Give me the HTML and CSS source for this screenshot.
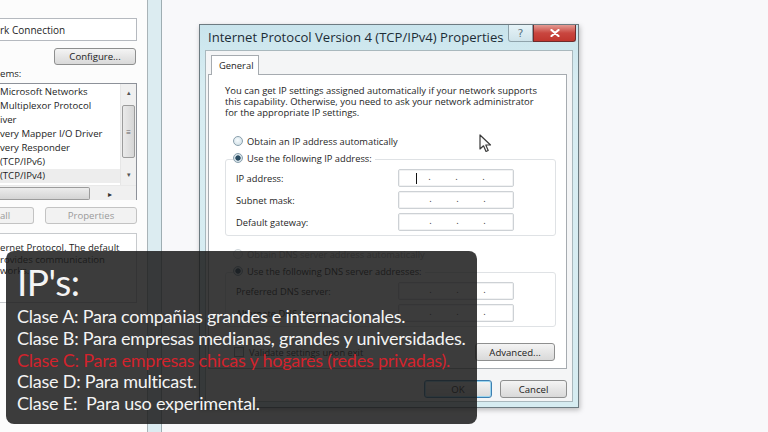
FILE: index.html
```html
<!DOCTYPE html>
<html>
<head>
<meta charset="utf-8">
<link rel="stylesheet" href="styles.css">
</head>
<body>
<div class="screen">
  <div class="leftwin">
    <div class="lw-client">
      <div class="tbox">rk Connection</div>
      <div class="cfg-row"><div class="btn cfg">Configure...</div></div>
      <div class="lbl">ems:</div>
      <div class="listbox">
        <div class="lb-main">
          <div class="lb-items">
            <div class="it">Microsoft Networks</div>
            <div class="it">Multiplexor Protocol</div>
            <div class="it">iver</div>
            <div class="it">very Mapper I/O Driver</div>
            <div class="it">very Responder</div>
            <div class="it">(TCP/IPv6)</div>
            <div class="it sel">(TCP/IPv4)</div>
          </div>
          <div class="vscroll">
            <div class="arr">&#9652;</div>
            <div class="vthumb"><span class="grip">&#8801;</span></div>
            <div class="arr">&#9662;</div>
          </div>
        </div>
        <div class="hscroll">
          <div class="htrack"><div class="hthumb"></div><div class="harr">&#9656;</div></div>
          <div class="corner"></div>
        </div>
      </div>
      <div class="btn-row">
        <div class="btn dis b-all">all</div>
        <div class="btn dis b-prop">Properties</div>
      </div>
      <div class="desc">
        <div>ernet Protocol. The default</div>
        <div>rovides communication</div>
        <div>works.</div>
      </div>
    </div>
    <div class="lw-frame"></div>
  </div>

  <div class="dialog">
    <div class="titlebar">
      <div class="title">Internet Protocol Version 4 (TCP/IPv4) Properties</div>
      <div class="caps">
        <div class="cap help">?</div>
        <div class="cap close">
          <svg width="10" height="8" viewBox="0 0 10 8"><path d="M1.5 1 L8.5 7 M8.5 1 L1.5 7" stroke="#fff" stroke-width="2.2" stroke-linecap="round"/></svg>
        </div>
      </div>
    </div>
    <div class="client">
      <div class="tabs"><div class="tab">General</div></div>
      <div class="panel">
        <p class="intro">You can get IP settings assigned automatically if your network supports<br>this capability. Otherwise, you need to ask your network administrator<br>for the appropriate IP settings.</p>
        <div class="radio r-first"><span class="rb"></span>Obtain an IP address automatically</div>
        <div class="group g1">
          <div class="radio legend"><span class="rb on"></span>Use the following IP address:</div>
          <div class="row"><span class="rl">IP address:</span><span class="field caret"><i class="car"></i><b>.</b><b>.</b><b>.</b></span></div>
          <div class="row"><span class="rl">Subnet mask:</span><span class="field"><b>.</b><b>.</b><b>.</b></span></div>
          <div class="row"><span class="rl">Default gateway:</span><span class="field"><b>.</b><b>.</b><b>.</b></span></div>
        </div>
        <div class="radio r-dns dim"><span class="rb dimrb"></span>Obtain DNS server address automatically</div>
        <div class="group g2">
          <div class="radio legend"><span class="rb on"></span>Use the following DNS server addresses:</div>
          <div class="row"><span class="rl">Preferred DNS server:</span><span class="field"><b>.</b><b>.</b><b>.</b></span></div>
          <div class="row"><span class="rl">Alternate DNS server:</span><span class="field"><b>.</b><b>.</b><b>.</b></span></div>
        </div>
        <div class="valrow">
          <div class="chk"><span class="cb"></span>Validate settings upon exit</div>
          <div class="btn adv">Advanced...</div>
        </div>
      </div>
      <div class="okrow">
        <div class="btn ok">OK</div>
        <div class="btn cancel">Cancel</div>
      </div>
    </div>
  </div>

  <div class="overlay">
    <div class="ov-title">IP's:</div>
    <div class="ov-line">Clase A: Para compañias grandes e internacionales.</div>
    <div class="ov-line">Clase B: Para empresas medianas, grandes y universidades.</div>
    <div class="ov-line red">Clase C: Para empresas chicas y hogares (redes privadas).</div>
    <div class="ov-line">Clase D: Para multicast.</div>
    <div class="ov-line">Clase E:&nbsp; Para uso experimental.</div>
  </div>

  <svg class="cursor" width="14" height="20" viewBox="0 0 14 20">
    <path d="M1 1 L1 15 L4.5 11.8 L7 17.5 L9.2 16.5 L6.8 11 L11.5 11 Z" fill="#fbfbfb" stroke="#3a3a3a" stroke-width="1.2" stroke-linejoin="round"/>
  </svg>
</div>
</body>
</html>
```

FILE: styles.css
```css
* { box-sizing: border-box; }
html, body { margin: 0; padding: 0; }
body {
  width: 768px; height: 432px; overflow: hidden;
  background: #f8f8fa;
  font-family: "Open Sans", "Noto Sans", sans-serif;
  color: #1e1e1e;
}
.screen {
  position: relative;
  width: 768px; height: 432px;
  display: flex;
  align-items: flex-start;
}

/* left window */
.leftwin { display: flex; height: 432px; flex: none; }
.lw-client {
  width: 148px; height: 100%;
  background: #fcfcfc;
  border-right: 1px solid #a9b3b7;
  padding-top: 18px;
  font-size: 9.6px;
}
.lw-frame {
  width: 14px; height: 100%;
  background: #dcecf1;
  border-right: 1px solid #9eadb2;
}
.tbox {
  width: 137px; height: 23px;
  border: 1px solid #b5b9bf; border-left: none;
  background: #fff;
  display: flex; align-items: center;
  font-size: 10px;
}
.cfg-row { display: flex; justify-content: flex-end; width: 137px; margin-top: 7px; padding-right: 1px; }
.btn {
  display: flex; align-items: center; justify-content: center;
  border: 1px solid #8e8f8f; border-radius: 3px;
  background: linear-gradient(#f4f4f4, #e6e6e6 50%, #d9d9d9);
  font-size: 9.6px; color: #222;
}
.cfg { width: 82px; height: 17px; }
.lbl { height: 18px; line-height: 18px; margin-top: 0; }
.listbox {
  width: 137px; height: 117px;
  border: 1px solid #8d9199; border-left: none;
  background: #fff;
}
.lb-main { display: flex; height: 101px; }
.lb-items { flex: 1; padding-top: 1px; }
.it { height: 14px; line-height: 14px; white-space: nowrap; overflow: hidden; }
.it.sel { background: #ededed; }
.vscroll {
  width: 16px; height: 101px;
  background: #f0f0f0;
  border-left: 1px solid #e6e6e6;
  display: flex; flex-direction: column; align-items: center;
}
.arr { height: 17px; line-height: 17px; font-size: 7px; color: #555; }
.vthumb {
  width: 13px; height: 53px; margin-top: 4px; margin-bottom: 8px;
  border: 1px solid #9c9c9c; border-radius: 2px;
  background: linear-gradient(90deg, #eaeaea, #d6d6d6);
  display: flex; align-items: center; justify-content: center;
}
.grip { font-size: 8px; color: #666; }
.hscroll { display: flex; height: 15px; border-top: 1px solid #e9e9e9; }
.htrack { flex: 1; background: #f0f0f0; display: flex; align-items: center; }
.hthumb {
  width: 90px; height: 13px;
  border: 1px solid #9c9c9c; border-left: none; border-radius: 0 2px 2px 0;
  background: linear-gradient(#ececec, #d4d4d4);
}
.harr { margin-left: 18px; font-size: 8px; color: #333; }
.corner { width: 16px; background: #f0f0f0; }
.btn-row { display: flex; gap: 11px; margin-top: 7px; height: 17px; }
.btn.dis { color: #9a9a9a; border-color: #c3c3c3; background: #f2f2f2; }
.b-all { width: 34px; border-left: none; border-radius: 0 3px 3px 0; justify-content: flex-start; padding-left: 0; }
.b-prop { width: 92px; }
.desc {
  width: 137px; height: 70px; margin-top: 9px;
  border: 1px solid #c7cacd; border-left: none;
  background: #fff;
  padding-top: 8px;
  line-height: 11.5px;
  white-space: nowrap;
}

/* dialog */
.dialog {
  flex: none;
  margin-left: 37px; margin-top: 24px;
  width: 380px; height: 384px;
  border: 1px solid #6d7b81;
  background: linear-gradient(#c9e4ec, #d8edf2 60px, #d6ecf1);
  box-shadow: 1px 2px 5px rgba(0,0,0,0.25);
  display: flex; flex-direction: column;
}
.titlebar { height: 25px; display: flex; align-items: flex-start; justify-content: space-between; }
.title {
  font-size: 13.1px; color: #1c2c36;
  padding-left: 8px; padding-top: 3px;
  white-space: nowrap;
}
.caps { display: flex; margin-right: 2px; }
.cap { height: 17px; display: flex; align-items: center; justify-content: center; }
.help {
  width: 25px;
  border: 1px solid #8fa3ab; border-top: none; border-radius: 0 0 0 3px;
  background: linear-gradient(#e6f3f7, #cfe3ea);
  font-size: 11px; color: #5c7682; font-family: "DejaVu Sans", sans-serif;
}
.close {
  width: 43px;
  border: 1px solid #6e2c2c; border-top: none; border-radius: 0 0 3px 0;
  background: linear-gradient(#e49a92, #c9463f 50%, #c0362e);
}
.client {
  flex: 1;
  margin: 0 5px 5px 5px;
  background: #f4f5f6;
  border: 1px solid #a9b8bd;
  padding: 4px 5px 0 2px;
  display: flex; flex-direction: column;
}
.tabs { display: flex; padding-left: 3px; height: 19px; }
.tab {
  width: 48px; height: 20px;
  border: 1px solid #a6abb0; border-bottom: none;
  background: #fff;
  font-size: 9.4px;
  padding-left: 7px; padding-top: 3px;
  position: relative; z-index: 1;
}
.panel {
  height: 295px;
  background: #fff;
  border: 1px solid #a6abb0;
  padding: 10px 0 0 16px;
  font-size: 9.3px;
}
.intro { margin: 0; white-space: nowrap; line-height: 11px; font-size: 9.45px; }
.radio { display: flex; align-items: center; height: 14px; white-space: nowrap; }
.rb {
  width: 10px; height: 10px; border-radius: 50%;
  border: 1px solid #8aa0ad;
  background: radial-gradient(circle at 45% 40%, #f6fbfd, #cbdbe3);
  margin-right: 4px; flex: none;
}
.rb.on { background: radial-gradient(circle, #2b4d63 0 2.3px, #d7e3e9 3px); }
.rb.dimrb { border-color: #cfd6da; background: #f3f5f6; }
.r-first { margin-top: 16px; padding-left: 8px; }
.group {
  width: 331px;
  border: 1px solid #dfe2e5; border-radius: 3px;
  padding: 0 0 0 10px;
}
.legend {
  width: fit-content; background: #fff;
  margin: -9px 0 2px -3px; padding: 0 3px 0 0;
}
.g1 { margin-top: 11px; height: 77px; }
.g2 { margin-top: 11px; height: 55px; }
.row { display: flex; align-items: center; height: 22px; }
.rl { width: 162px; flex: none; }
.field {
  width: 116px; height: 18px;
  border: 1px solid #cdd1d5; border-radius: 2px;
  background: #fff;
  display: flex; align-items: center;
  padding-left: 18px;
  box-shadow: inset 0 0 0 1px #f1f2f3;
}
.field.caret { padding-left: 17px; }
.car { width: 1px; height: 11px; background: #111; flex: none; margin-right: -1px; }
.field b { width: 27px; text-align: center; font-weight: normal; color: #333; line-height: 10px; padding-bottom: 3px; }
.dim { color: #a7a7a7; }
.r-dns { margin-top: 11px; padding-left: 8px; }
.valrow { display: flex; align-items: center; justify-content: space-between; width: 330px; margin-top: 16px; }
.chk { display: flex; align-items: center; padding-left: 9px; }
.cb { width: 10px; height: 10px; border: 1px solid #8f9aa3; background: linear-gradient(#dfe5e9, #f7f9fa); margin-right: 5px; }
.adv { width: 80px; height: 18px; font-size: 9.6px; }
.okrow { display: flex; justify-content: flex-end; gap: 8px; margin-top: 11px; padding-right: 0; }
.ok { width: 68px; height: 18px; border-color: #3c7fb1; box-shadow: inset 0 0 0 1px #9ad4ee; }
.cancel { width: 67px; height: 18px; }

/* overlay caption */
.overlay {
  position: absolute; left: 6px; top: 251px;
  width: 471px; height: 173px;
  border-radius: 8px;
  background: rgba(26, 26, 26, 0.85);
  padding: 9px 0 0 11px;
  color: #f4f4f4;
  font-family: "Lato", "Open Sans", sans-serif;
}
.ov-title { font-size: 37px; line-height: 44px; height: 46px; letter-spacing: -0.5px; }
.ov-line { font-size: 18px; line-height: 21.8px; white-space: nowrap; letter-spacing: -0.23px; }
.ov-line.red { color: #d2232c; }

.cursor { position: absolute; left: 479px; top: 134px; }
```
